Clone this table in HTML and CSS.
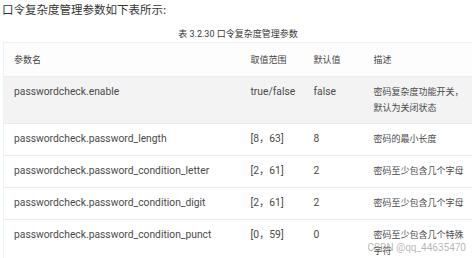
FILE: index.html
```html
<!DOCTYPE html>
<html lang="zh">
<head>
<meta charset="utf-8">
<link rel="stylesheet" href="styles.css">
</head>
<body>
<p class="intro">口令复杂度管理参数如下表所示:</p>
<p class="caption">表 3.2.30 口令复杂度管理参数</p>
<table class="params">
  <colgroup>
    <col class="c-name"><col class="c-range"><col class="c-def"><col class="c-desc">
  </colgroup>
  <thead>
    <tr><th>参数名</th><th>取值范围</th><th>默认值</th><th>描述</th></tr>
  </thead>
  <tbody>
    <tr class="shade"><td>passwordcheck.enable</td><td>true/false</td><td>false</td><td class="cjk">密码复杂度功能开关，默认为关闭状态</td></tr>
    <tr><td>passwordcheck.password_length</td><td>[8，63]</td><td>8</td><td class="cjk">密码的最小长度</td></tr>
    <tr><td>passwordcheck.password_condition_letter</td><td>[2，61]</td><td>2</td><td class="cjk">密码至少包含几个字母</td></tr>
    <tr><td>passwordcheck.password_condition_digit</td><td>[2，61]</td><td>2</td><td class="cjk">密码至少包含几个字母</td></tr>
    <tr><td>passwordcheck.password_condition_punct</td><td>[0，59]</td><td>0</td><td class="cjk">密码至少包含几个特殊字符</td></tr>
  </tbody>
</table>
<div class="watermark">CSDN @qq_44635470</div>
</body>
</html>
```
FILE: styles.css
```css
html, body {
  margin: 0;
  padding: 0;
  background: #ffffff;
}
body {
  font-family: Roboto, "Noto Sans CJK SC", sans-serif;
  color: #4a4a4a;
  position: relative;
  height: 258px;
  overflow: hidden;
}
.intro {
  margin: 0;
  padding: 1px 0 0 2px;
  font-family: "Noto Sans CJK SC", sans-serif;
  font-size: 11.5px;
  line-height: 17px;
  color: #333;
}
.caption {
  margin: 9px 0 0 0;
  padding-left: 2px;
  text-align: center;
  font-family: Roboto, "Noto Sans CJK SC", sans-serif;
  font-size: 9px;
  line-height: 14px;
  color: #3a3a3a;
}
.params {
  margin: 1px 0 0 3px;
  width: 468px;
  border-collapse: collapse;
  table-layout: fixed;
  font-size: 10.3px;
  line-height: 16px;
}
.c-name { width: 237px; }
.c-range { width: 63px; }
.c-def { width: 60px; }
.c-desc { width: 108px; }
.params th, .params td {
  text-align: left;
  vertical-align: top;
  padding: 7px 10px 8px 10px;
  font-weight: normal;
  border-top: 1px solid #ececec;
}
.params th {
  padding: 9px 10px 8px 10px;
  font-size: 9px;
  background: #fdfdfd;
  color: #444;
  border-top: 1px solid #f0f0f0;
}
.params tr > :first-child {
  border-left: 1px solid #f0f0f0;
}
.params .shade td {
  background: #f3f3f3;
  padding-bottom: 7px;
}
.params td.cjk {
  font-size: 9px;
  padding-right: 4px;
}
.watermark {
  position: absolute;
  right: 8px;
  bottom: 5px;
  font-family: Roboto, sans-serif;
  font-size: 10px;
  color: rgba(160, 160, 160, 0.75);
}
```
